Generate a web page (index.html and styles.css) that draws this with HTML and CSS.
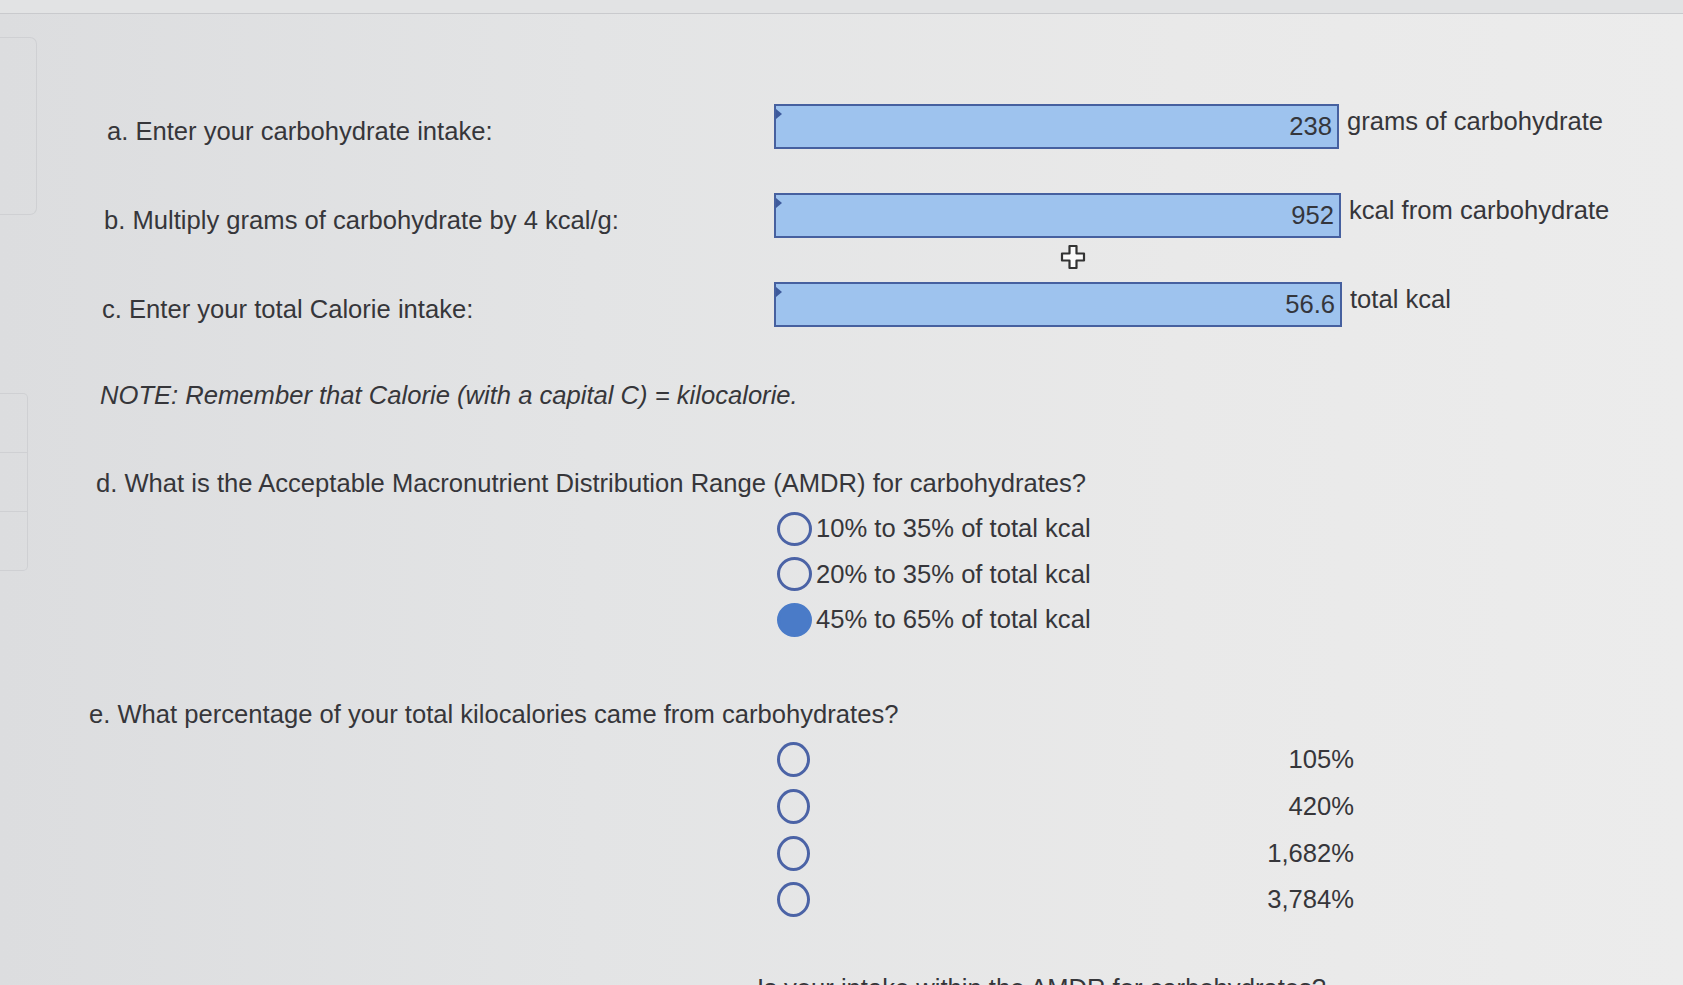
FILE: index.html
```html
<!DOCTYPE html>
<html lang="en">
<head>
<meta charset="utf-8">
<title>Carbohydrate intake</title>
<link rel="stylesheet" href="styles.css">
</head>
<body>
<div class="topline"></div>
<div class="layout">
  <aside class="rail">
    <div class="rail-box"></div>
    <div class="rail-stack">
      <div class="rail-cell"></div>
      <div class="rail-cell"></div>
      <div class="rail-cell"></div>
    </div>
  </aside>
  <main class="main">
    <div class="in-row row-a">
      <div class="label">a. Enter your carbohydrate intake:</div>
      <div class="field w-a"><span class="val">238</span></div>
      <div class="suffix">grams of carbohydrate</div>
    </div>
    <div class="in-row row-b">
      <div class="label lb-b">b. Multiply grams of carbohydrate by 4 kcal/g:</div>
      <div class="field w-b"><span class="val">952</span></div>
      <div class="suffix">kcal from carbohydrate</div>
    </div>
    <div class="in-row row-c">
      <div class="label lb-c">c. Enter your total Calorie intake:</div>
      <div class="field w-c"><span class="val">56.6</span></div>
      <div class="suffix">total kcal</div>
    </div>
    <svg class="cursor" width="28" height="28" viewBox="0 0 28 28" aria-hidden="true">
      <path d="M10.5 3h7v7.5H25v7h-7.5V25h-7v-7.5H3v-7h7.5z" fill="#fbfbfb" stroke="#333" stroke-width="2.2" stroke-linejoin="round"/>
    </svg>

    <p class="note">NOTE: Remember that Calorie (with a capital C) = kilocalorie.</p>

    <p class="question q-d">d. What is the Acceptable Macronutrient Distribution Range (AMDR) for carbohydrates?</p>
    <div class="opts-d">
      <div class="opt-d"><span class="radio"></span><span>10% to 35% of total kcal</span></div>
      <div class="opt-d"><span class="radio"></span><span>20% to 35% of total kcal</span></div>
      <div class="opt-d"><span class="radio checked"></span><span>45% to 65% of total kcal</span></div>
    </div>

    <p class="question q-e">e. What percentage of your total kilocalories came from carbohydrates?</p>
    <div class="opts-e">
      <div class="opt-e"><span class="radio tall"></span><span class="pct">105%</span></div>
      <div class="opt-e"><span class="radio tall"></span><span class="pct">420%</span></div>
      <div class="opt-e"><span class="radio tall"></span><span class="pct">1,682%</span></div>
      <div class="opt-e"><span class="radio tall"></span><span class="pct">3,784%</span></div>
    </div>

    <p class="next">Is your intake within the AMDR for carbohydrates?</p>
  </main>
</div>
</body>
</html>
```

FILE: styles.css
```css
html, body {
  margin: 0;
  padding: 0;
  height: 100%;
  overflow: hidden;
}

body {
  background: linear-gradient(90deg, #dcdddf 0%, #e3e4e5 35%, #e9e9e9 70%, #ececec 100%);
  font-family: "Liberation Sans", Arial, sans-serif;
  font-size: 25.6px;
  color: #36363a;
}

.topline {
  height: 13px;
  border-bottom: 1px solid #c9cacd;
  background: #e2e3e4;
}

.layout {
  display: flex;
}

.rail {
  flex: 0 0 40px;
  display: flex;
  flex-direction: column;
}

.rail-box {
  margin-top: 23px;
  width: 36px;
  height: 176px;
  border: 1px solid #cfd0d3;
  border-left: none;
  border-radius: 0 7px 7px 0;
}

.rail-stack {
  margin-top: 178px;
  width: 27px;
  border: 1px solid #cfd0d3;
  border-left: none;
  border-radius: 0 5px 5px 0;
}

.rail-cell {
  height: 58px;
  border-bottom: 1px solid #cfd0d3;
}

.rail-cell:last-child {
  border-bottom: none;
}

.main {
  flex: 1;
  position: relative;
}

.in-row {
  display: flex;
  align-items: center;
  height: 46px;
}

.row-a { margin-top: 89px; }
.row-b { margin-top: 43px; }
.row-c { margin-top: 43px; }

.label {
  flex: 0 0 734px;
  box-sizing: border-box;
  padding-left: 67px;
  padding-top: 10px;
  white-space: nowrap;
}

.lb-b { padding-left: 64px; }
.lb-c { padding-left: 62px; }

.field {
  position: relative;
  box-sizing: border-box;
  height: 45px;
  background: #9ec3ee;
  border: 2px solid #46609f;
  display: flex;
  align-items: center;
  justify-content: flex-end;
  padding-right: 5px;
}

.field::before {
  content: "";
  position: absolute;
  left: 0;
  top: 3px;
  border-left: 6px solid #3d5a9c;
  border-top: 5px solid transparent;
  border-bottom: 5px solid transparent;
}

.w-a { width: 565px; }
.w-b { width: 567px; }
.w-c { width: 568px; }

.val {
  color: #34363c;
}

.suffix {
  margin-left: 8px;
  padding-bottom: 10px;
  white-space: nowrap;
}

.cursor {
  position: absolute;
  left: 1019px;
  top: 229px;
}

.note {
  margin: 53px 0 0 60px;
  line-height: 30px;
  font-style: italic;
  white-space: nowrap;
}

.question {
  line-height: 30px;
  white-space: nowrap;
}

.q-d { margin: 58px 0 0 56px; }
.q-e { margin: 56px 0 0 49px; }

.opts-d {
  margin: 8px 0 0 737px;
  display: flex;
  flex-direction: column;
}

.opt-d {
  height: 45.5px;
  display: flex;
  align-items: center;
  gap: 4px;
  white-space: nowrap;
}

.radio {
  flex: 0 0 auto;
  box-sizing: border-box;
  width: 35px;
  height: 34px;
  border: 3px solid #4b63a6;
  border-radius: 50%;
}

.radio.checked {
  background: #4a7bc8;
  border-color: #4a7bc8;
}

.radio.tall {
  width: 33px;
  height: 35px;
}

.opts-e {
  margin: 8px 0 0 737px;
  width: 577px;
  display: flex;
  flex-direction: column;
}

.opt-e {
  height: 46.7px;
  display: flex;
  align-items: center;
  justify-content: space-between;
}

.pct {
  white-space: nowrap;
}

.next {
  margin: 50px 0 0 717px;
  line-height: 30px;
  white-space: nowrap;
}
```
